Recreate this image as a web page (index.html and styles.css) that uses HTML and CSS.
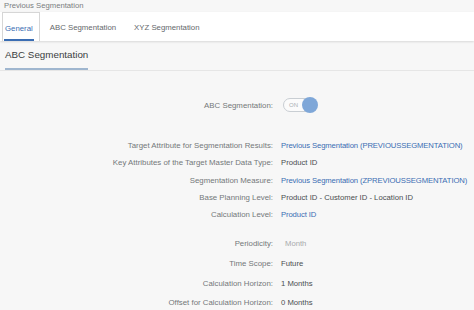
FILE: index.html
```html
<!DOCTYPE html>
<html lang="en">
<head>
  <meta charset="UTF-8" />
  <title>Previous Segmentation</title>
  <link rel="stylesheet" href="styles.css">
</head>
<body>

  <div class="title-bar">Previous Segmentation</div>

  <div class="tabs">
    <div class="tab active">General</div>
    <div class="tab">ABC Segmentation</div>
    <div class="tab">XYZ Segmentation</div>
  </div>

  <div class="section-head">
    <h2>ABC Segmentation</h2>
  </div>

  <div class="form">
    <div class="group first">
      <div class="row toggle-row">
        <span class="label">ABC Segmentation:</span>
        <span class="value">
          <span class="switch"><span class="switch-text">ON</span><span class="knob"></span></span>
        </span>
      </div>
    </div>

    <div class="group mid">
      <div class="row">
        <span class="label">Target Attribute for Segmentation Results:</span>
        <span class="value link">Previous Segmentation (PREVIOUSSEGMENTATION)</span>
      </div>
      <div class="row">
        <span class="label">Key Attributes of the Target Master Data Type:</span>
        <span class="value">Product ID</span>
      </div>
      <div class="row">
        <span class="label">Segmentation Measure:</span>
        <span class="value link">Previous Segmentation (ZPREVIOUSSEGMENTATION)</span>
      </div>
      <div class="row">
        <span class="label">Base Planning Level:</span>
        <span class="value">Product ID - Customer ID - Location ID</span>
      </div>
      <div class="row">
        <span class="label">Calculation Level:</span>
        <span class="value link">Product ID</span>
      </div>
    </div>

    <div class="group last">
      <div class="row">
        <span class="label">Periodicity:</span>
        <span class="value muted">Month</span>
      </div>
      <div class="row">
        <span class="label">Time Scope:</span>
        <span class="value">Future</span>
      </div>
      <div class="row">
        <span class="label">Calculation Horizon:</span>
        <span class="value">1 Months</span>
      </div>
      <div class="row">
        <span class="label">Offset for Calculation Horizon:</span>
        <span class="value">0 Months</span>
      </div>
    </div>
  </div>

</body>
</html>
```

FILE: styles.css
```css
body {
  font-family: 'Liberation Sans', Arial, sans-serif;
  background: #f7f7f7;
  margin: 0;
  color: #333;
}

.title-bar {
  height: 12px;
  line-height: 11px;
  padding-left: 4px;
  font-size: 7.7px;
  color: #7a7d80;
  background: #f7f7f7;
}

.tabs {
  display: flex;
  height: 29px;
  background: #fff;
  padding-left: 2px;
  box-shadow: 0 1px 2px rgba(0, 0, 0, 0.12);
}

.tab {
  display: flex;
  align-items: center;
  padding-top: 2px;
  font-size: 7.8px;
  color: #65686b;
}

.tab.active {
  color: #3a6db3;
  border: 1px solid #d6d6d6;
  border-bottom: none;
  position: relative;
  padding: 2px 6px 0 2px;
  margin-right: 10px;
}

.tab.active::after {
  content: '';
  position: absolute;
  left: 1px;
  right: 5px;
  bottom: 0;
  height: 2px;
  background: #3a6db3;
}

.tab + .tab {
  margin-right: 18px;
}

.section-head {
  height: 29px;
  border-bottom: 1px solid #e6e6e6;
  padding-left: 5px;
}

.section-head h2 {
  display: inline-block;
  margin: 0;
  height: 27px;
  line-height: 28px;
  font-size: 9.8px;
  font-weight: normal;
  color: #3a3d40;
  border-bottom: 2px solid #9fb6cf;
}

.form {
  padding-top: 24px;
  font-size: 7.85px;
}

.row {
  display: grid;
  grid-template-columns: 273px 1fr;
  column-gap: 8px;
  align-items: center;
  height: 17.3px;
}

.toggle-row {
  height: 20px;
}

.group.mid {
  margin-top: 22px;
}

.group.last {
  margin-top: 10.6px;
}

.group.last .row {
  height: 19.7px;
}

.label {
  text-align: right;
  color: #74777a;
  white-space: nowrap;
}

.value {
  font-size: 7.7px;
  color: #4a4d50;
  white-space: nowrap;
}

.value.link {
  color: #3a6db3;
  letter-spacing: -0.12px;
}

.value.muted {
  color: #a8aaac;
  padding-left: 4px;
}

.switch {
  display: inline-flex;
  align-items: center;
  width: 32px;
  height: 12px;
  border: 1px solid #c9ced3;
  border-radius: 7px;
  position: relative;
  margin-left: 2px;
  background: #fbfbfb;
}

.switch-text {
  font-size: 6px;
  color: #a9aeb3;
  padding-left: 5px;
}

.knob {
  position: absolute;
  right: -2px;
  top: -2px;
  width: 16px;
  height: 16px;
  border-radius: 50%;
  background: #7fa7d8;
}
```
